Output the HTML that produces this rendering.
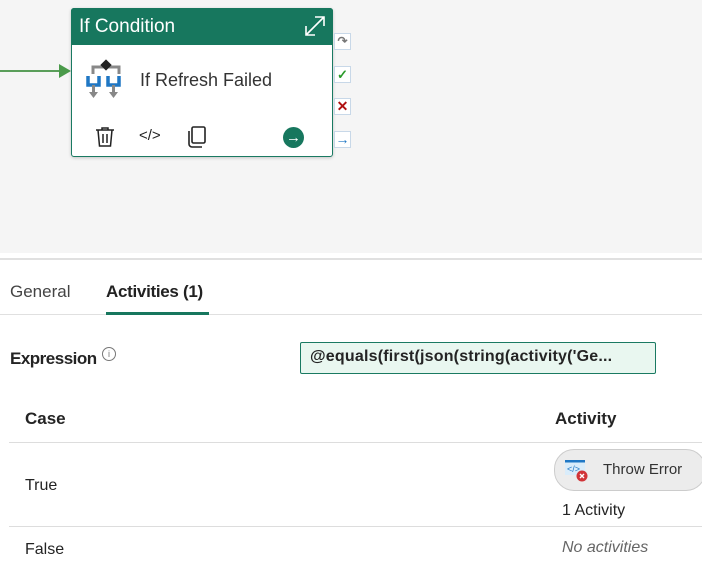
<!DOCTYPE html>
<html><head><style>
body{margin:0;width:702px;height:565px;position:relative;overflow:hidden;background:#fff;font-family:"Liberation Sans",sans-serif;color:#242424}
.a{position:absolute}
</style></head><body>
<div class="a" style="left:0;top:0;width:702px;height:253px;background:#f5f5f5"></div>
<div class="a" style="left:0;top:258px;width:702px;height:2px;background:#e0e0e0"></div>
<div class="a" style="left:0;top:70px;width:60px;height:2px;background:#5a9e5a"></div>
<div class="a" style="left:59px;top:64px;width:0;height:0;border-left:12px solid #4a9a4a;border-top:7px solid transparent;border-bottom:7px solid transparent"></div>
<div class="a" style="left:71px;top:8px;width:260px;height:147px;background:#fff;border:1px solid #1a7a62;border-radius:3px;box-shadow:0 1px 3px rgba(0,0,0,.2)"></div>
<div class="a" style="left:71px;top:8px;width:262px;height:37px;background:#17775e;border-radius:3px 3px 0 0"></div>
<div class="a" style="left:79px;top:16px;color:#fff;font-size:19px">If Condition</div>
<svg class="a" style="left:303px;top:14px" width="24" height="24" viewBox="0 0 24 24" fill="none" stroke="#fff" stroke-width="1.6"><path d="M3 21L21 3M12 3h9v9M3 12v9h9"/></svg>
<svg class="a" style="left:84px;top:58px" width="44" height="44" viewBox="0 0 44 44"><path d="M9 16V9h26v7" stroke="#888" stroke-width="3" fill="none"/><rect x="18" y="3" width="8" height="8" transform="rotate(45 22 7)" fill="#222"/><path d="M4 18v9h11v-9M24 18v9h11v-9" stroke="#1f77c4" stroke-width="3.5" fill="none"/><path d="M9.5 27v8M29.5 27v8" stroke="#888" stroke-width="3"/><path d="M5 34l4.5 6 4.5-6zM25 34l4.5 6 4.5-6z" fill="#888"/></svg>
<div class="a" style="left:140px;top:70px;font-size:18px;color:#333">If Refresh Failed</div>
<svg class="a" style="left:94px;top:126px" width="22" height="22" viewBox="0 0 22 22" fill="none" stroke="#222" stroke-width="1.5"><path d="M2 4h18M8 4V2h6v2M4 4l1.5 16h11L18 4M9 8v9M13 8v9"/></svg>
<div class="a" style="left:139px;top:127px;font-size:15px;color:#222">&lt;/&gt;</div>
<svg class="a" style="left:186px;top:126px" width="22" height="22" viewBox="0 0 22 22" fill="none" stroke="#222" stroke-width="1.6"><rect x="6" y="1" width="13" height="16" rx="1.5"/><path d="M3 5v13a3 3 0 0 0 3 3h10"/></svg>
<div class="a" style="left:283px;top:127px;width:21px;height:21px;border-radius:50%;background:#17775e;color:#fff;font-size:15px;text-align:center;line-height:21px;font-weight:bold">→</div>
<div class="a" style="left:334px;top:33px;width:15px;height:15px;background:#fff;border:1px solid #c8d8e8;color:#777;font-size:12px;text-align:center;line-height:15px;font-weight:bold">↷</div>
<div class="a" style="left:334px;top:66px;width:15px;height:15px;background:#fff;border:1px solid #c8d8e8;color:#2a9a2a;font-size:13px;text-align:center;line-height:15px;font-weight:bold">✓</div>
<div class="a" style="left:334px;top:98px;width:15px;height:15px;background:#fff;border:1px solid #c8d8e8;color:#b01010;font-size:14px;text-align:center;line-height:15px;font-weight:bold">✕</div>
<div class="a" style="left:334px;top:131px;width:15px;height:15px;background:#fff;border:1px solid #c8d8e8;color:#1f77c4;font-size:14px;text-align:center;line-height:15px;font-weight:bold">→</div>
<div class="a" style="left:10px;top:282px;font-size:17px;color:#444">General</div>
<div class="a" style="left:106px;top:282px;font-size:17px;color:#222;font-weight:bold;letter-spacing:-0.3px">Activities (1)</div>
<div class="a" style="left:0;top:314px;width:702px;height:1px;background:#e0e0e0"></div>
<div class="a" style="left:106px;top:312px;width:103px;height:3px;background:#17775e"></div>
<div class="a" style="left:10px;top:349px;font-size:17px;font-weight:bold;letter-spacing:-0.5px">Expression</div>
<div class="a" style="left:102px;top:347px;width:12px;height:12px;border:1px solid #777;border-radius:50%;font-size:9px;text-align:center;line-height:12px;color:#777">i</div>
<div class="a" style="left:300px;top:342px;width:354px;height:30px;background:#e9f7f0;border:1px solid #1a7a62;border-radius:2px"></div>
<div class="a" style="left:310px;top:348px;font-size:16px;font-weight:bold;letter-spacing:0.2px">@equals(first(json(string(activity('Ge...</div>
<div class="a" style="left:25px;top:409px;font-size:17px;font-weight:bold">Case</div>
<div class="a" style="left:555px;top:409px;font-size:17px;font-weight:bold">Activity</div>
<div class="a" style="left:9px;top:442px;width:693px;height:1px;background:#ddd"></div>
<div class="a" style="left:25px;top:477px;font-size:16px">True</div>
<div class="a" style="left:554px;top:449px;width:150px;height:40px;background:#ececec;border:1px solid #ccc;border-radius:20px"></div>
<svg class="a" style="left:564px;top:459px" width="26" height="24" viewBox="0 0 26 24"><rect x="1" y="1" width="20" height="15" fill="#d9ecfa"/><rect x="1" y="1" width="20" height="2.5" fill="#1f77c4"/><text x="3" y="13" font-size="9" fill="#1f77c4" font-family="Liberation Sans">&lt;/&gt;</text><circle cx="18" cy="17" r="5.5" fill="#d13438"/><path d="M16 15l4 4M20 15l-4 4" stroke="#fff" stroke-width="1.4"/></svg>
<div class="a" style="left:603px;top:461px;font-size:15px;color:#333">Throw Error</div>
<div class="a" style="left:562px;top:502px;font-size:16px">1 Activity</div>
<div class="a" style="left:9px;top:526px;width:693px;height:1px;background:#ddd"></div>
<div class="a" style="left:25px;top:541px;font-size:16px">False</div>
<div class="a" style="left:562px;top:539px;font-size:16px;font-style:italic;color:#666">No activities</div>
</body></html>
